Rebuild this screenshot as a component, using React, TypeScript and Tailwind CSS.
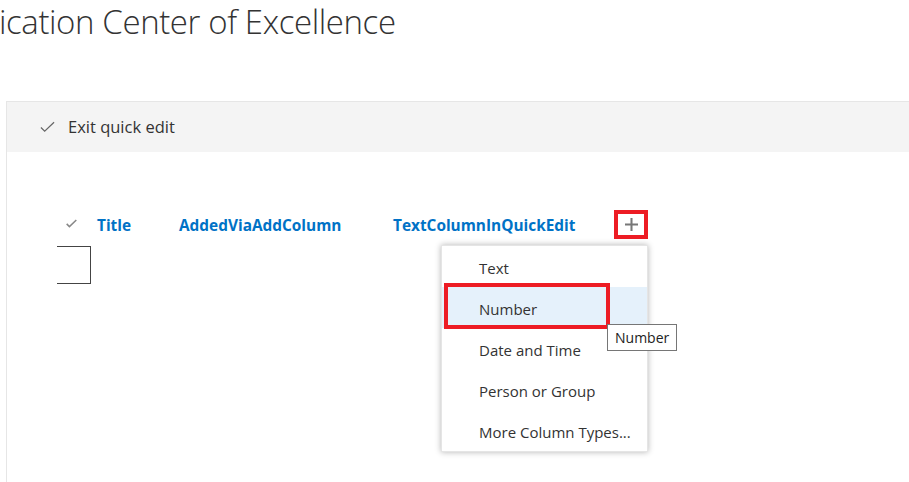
import React from "react";

const font = { fontFamily: '"Open Sans", "Noto Sans", sans-serif' };

function Check({ className, w = 1.3 }: { className?: string; w?: number }) {
  return (
    <svg viewBox="0 0 16 12" className={className} fill="none">
      <path d="M1 6.5 L5 10.5 L15 1" stroke="currentColor" strokeWidth={w} />
    </svg>
  );
}

export default function App() {
  const items = ["Text", "Number", "Date and Time", "Person or Group", "More Column Types..."];
  return (
    <div className="relative w-[909px] h-[482px] overflow-hidden bg-white text-[#333]" style={font}>
      <div className="h-[101px]">
        <div className="text-[33px] font-light leading-[44px] ml-[-1px] tracking-[-0.4px] text-[#333]">ication Center of Excellence</div>
      </div>
      <div className="flex h-[381px]">
        <div className="w-[7px] border-r border-[#e6e6e6] shrink-0" />
        <div className="flex-1 flex flex-col">
          <div className="h-[51px] bg-[#f4f4f4] border-t border-[#e6e6e6] flex items-center pl-[33px] gap-[13px]">
            <Check className="w-[15px] h-[12px] text-[#666]" />
            <span className="text-[16.5px] leading-none text-[#333]">Exit quick edit</span>
          </div>
          <div className="relative flex-1">
            <div className="flex items-center h-[30px] mt-[57px] text-[#0072c6] font-bold text-[15.4px]">
              <Check className="ml-[59px] w-[11px] h-[9px] text-[#888] mb-[2px]" w={2.2} />
              <span className="ml-[20px] w-[82px] pt-[3px]">Title</span>
              <span className="w-[214px] pt-[3px]">AddedViaAddColumn</span>
              <span className="w-[221px] pt-[3px]">TextColumnInQuickEdit</span>
              <div className="w-[34px] h-[29px] border-[4px] border-[#ed1c24] flex items-center justify-center">
                <svg viewBox="0 0 14 14" className="w-[13px] h-[13px]">
                  <path d="M7 0 V14 M0 7 H14" stroke="#777" strokeWidth="2.2" />
                </svg>
              </div>
            </div>
            <div className="ml-[50px] mt-[7px] w-[34px] h-[38px] border-t border-r border-b border-[#444]" />
          </div>
        </div>
      </div>

      <div className="absolute left-[441px] top-[245px] w-[207px] bg-white border border-[#e5e5e5] shadow-[0_0_6px_rgba(0,0,0,0.3)]">
        {items.map((t) => (
          <div
            key={t}
            className={`h-[41px] flex items-center pl-[37px] pt-[3px] text-[15px] text-[#333] ${t === "Number" ? "bg-[#e5f1fb]" : ""}`}
          >
            {t}
          </div>
        ))}
      </div>
      <div className="absolute left-[444px] top-[283px] w-[166px] h-[46px] border-[4px] border-[#ed1c24]" />
      <div className="absolute left-[607px] top-[324px] h-[27px] px-[7px] flex items-center bg-white border border-[#767676] text-[14px] text-[#222]">
        Number
      </div>
    </div>
  );
}
